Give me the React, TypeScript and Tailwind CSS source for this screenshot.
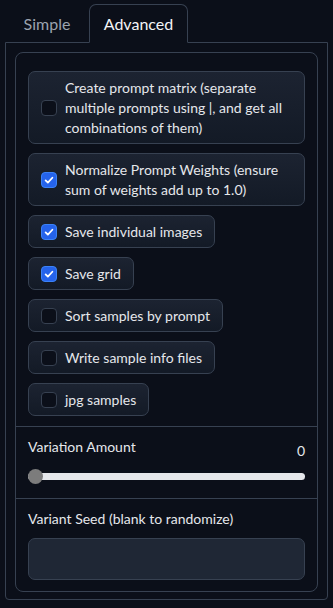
import React, { useState } from "react";

type Opt = { label: string; checked: boolean };

const initial: Opt[] = [
  { label: "Create prompt matrix (separate multiple prompts using |, and get all combinations of them)", checked: false },
  { label: "Normalize Prompt Weights (ensure sum of weights add up to 1.0)", checked: true },
  { label: "Save individual images", checked: true },
  { label: "Save grid", checked: true },
  { label: "Sort samples by prompt", checked: false },
  { label: "Write sample info files", checked: false },
  { label: "jpg samples", checked: false },
];

const tabs = [
  { name: "Simple", width: "w-[84px]" },
  { name: "Advanced", width: "w-[99px]" },
];

function CheckRow({ opt, onToggle }: { opt: Opt; onToggle: () => void }) {
  return (
    <label className="flex w-fit max-w-full cursor-pointer items-center gap-2 rounded-[7px] border border-[#374151] bg-gradient-to-b from-[#1c2331] to-[#131a26] px-3 py-[5.5px]">
      <span
        onClick={onToggle}
        className={
          "flex h-4 w-4 shrink-0 items-center justify-center rounded-[4px] border " +
          (opt.checked ? "border-[#3b82f6] bg-[#2563eb]" : "border-[#374151] bg-[#0b0f19]")
        }
      >
        {opt.checked && (
          <svg viewBox="0 0 16 16" className="h-3 w-3" fill="none" stroke="white" strokeWidth="2.4" strokeLinecap="round" strokeLinejoin="round">
            <path d="M3.5 8.5l3 3 6-6.5" />
          </svg>
        )}
      </span>
      <span className="text-[14px] leading-5 text-[#e5e7eb]">{opt.label}</span>
    </label>
  );
}

export default function App() {
  const [opts, setOpts] = useState(initial);
  const [tab, setTab] = useState("Advanced");

  return (
    <div className="min-h-[608px] w-[333px] bg-[#0b0f19] px-[5px] pt-1 font-['Lato',sans-serif]">
      <div className="flex">
        {tabs.map((t) => (
          <button
            key={t.name}
            onClick={() => setTab(t.name)}
            className={
              "-mb-px h-[39px] rounded-t-[7px] border text-center text-[16px] " +
              t.width +
              " " +
              (tab === t.name
                ? "border-[#374151] border-b-[#0b0f19] bg-[#0b0f19] text-[#f3f4f6]"
                : "border-transparent text-[#9ca3af]")
            }
          >
            {t.name}
          </button>
        ))}
      </div>
      <div className="rounded-b-[4px] border border-[#374151] px-[9px] pb-[7px] pt-[9px]">
        <div className="rounded-[8px] border border-[#374151]">
          <div className="flex flex-col gap-[9px] px-3 pb-[10px] pt-[18px]">
            {opts.map((o, i) => (
              <CheckRow
                key={o.label}
                opt={o}
                onToggle={() => setOpts(opts.map((p, j) => (j === i ? { ...p, checked: !p.checked } : p)))}
              />
            ))}
          </div>
          <div className="border-t border-[#374151] px-3 pb-[14px] pt-[10px]">
            <div className="flex items-start justify-between">
              <span className="text-[14px] leading-5 text-[#e5e7eb]">Variation Amount</span>
              <span className="mt-[4px] text-[14px] leading-5 text-[#e5e7eb]">0</span>
            </div>
            <div className="relative mt-[8px] h-[15px]">
              <div className="absolute left-0 right-0 top-[4px] h-[7px] rounded-full bg-[#e5e7eb]" />
              <div className="absolute left-0 top-0 h-[15px] w-[15px] rounded-full bg-[#7c7c7c]" />
            </div>
          </div>
          <div className="border-t border-[#374151] px-3 pb-[11px] pt-[10px]">
            <div className="text-[14px] leading-5 text-[#e5e7eb]">Variant Seed (blank to randomize)</div>
            <input className="mt-[9px] h-[42px] w-full rounded-[7px] border border-[#374151] bg-[#1f2735] px-3 text-[14px] text-[#e5e7eb] outline-none" />
          </div>
        </div>
      </div>
    </div>
  );
}
